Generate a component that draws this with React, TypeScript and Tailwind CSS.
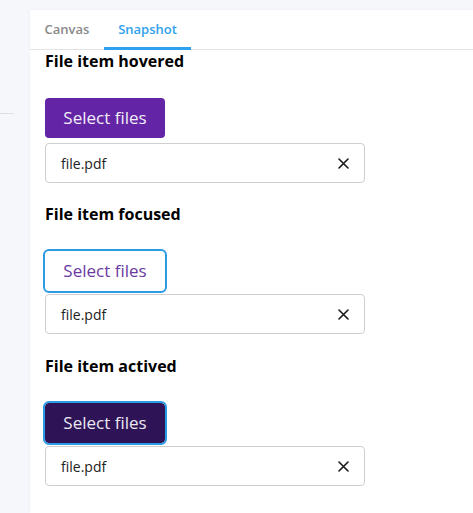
import React from "react";

function XIcon() {
  return (
    <svg width="11" height="11" viewBox="0 0 11 11" fill="none">
      <path d="M1 1L10 10M10 1L1 10" stroke="#1a1a1a" strokeWidth="1.6" strokeLinecap="round" />
    </svg>
  );
}

function FileItem({ tight }: { tight?: boolean }) {
  return (
    <div className={`${tight ? "mt-[3px]" : "mt-[5px]"} w-[320px] h-[40px] border border-[#cfcfcf] rounded-[4px] flex items-center justify-between pl-[15px] pr-[15px] bg-white`}>
      <span className="text-[14px] text-[#222]">file.pdf</span>
      <XIcon />
    </div>
  );
}

function Section({ title, variant }: { title: string; variant: "hover" | "focus" | "active" }) {
  const btn =
    variant === "hover"
      ? "bg-[#6324a5] text-[#f2eef8]"
      : variant === "focus"
      ? "bg-white text-[#6a3aa2] outline-2 outline-[#2b9be6]"
      : "bg-[#2e1456] text-[#ece8f4] outline-2 outline-[#2b9be6]";
  const tight = variant !== "hover";
  return (
    <div className={tight ? "pb-[21px]" : "pb-[20px]"}>
      <h3 className="text-[16px] leading-[22px] font-bold text-black">{title}</h3>
      <button className={`mt-[26px] w-[120px] h-[40px] rounded-[4px] text-[17px] ${btn}`}>Select files</button>
      <FileItem tight={tight} />
    </div>
  );
}

export default function App() {
  return (
    <div className="w-full h-[513px] bg-[#f5f7fa] flex overflow-hidden" style={{ fontFamily: '"Open Sans", "Noto Sans", sans-serif' }}>
      <div className="w-[30px] shrink-0 pt-[113px]">
        <div className="w-[14px] h-px bg-[#dde1e6]" />
      </div>
      <div className="flex-1 mt-[10px] bg-white shadow-[0_0_2px_rgba(0,0,0,0.06)] flex flex-col">
        <div className="h-[40px] border-b border-[#e3e3e3] flex shrink-0">
          <div className="w-[74px] flex items-center justify-center text-[13px] font-semibold text-[#8a8a8a]">Canvas</div>
          <div className="w-[87px] flex items-center justify-center text-[13px] font-semibold text-[#2ea2ee] border-b-[3px] border-[#2ea2ee] -mb-px pt-[3px]">Snapshot</div>
        </div>
        <div className="pl-[15px]">
          <Section title="File item hovered" variant="hover" />
          <Section title="File item focused" variant="focus" />
          <Section title="File item actived" variant="active" />
        </div>
      </div>
    </div>
  );
}
